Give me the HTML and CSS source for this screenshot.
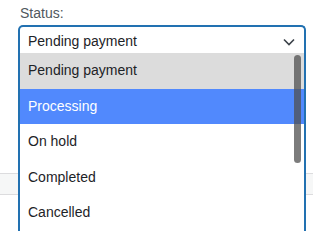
FILE: index.html
```html
<!DOCTYPE html>
<html lang="en">

<head>
    <meta charset="UTF-8">
    <meta name="viewport" content="width=device-width, initial-scale=1.0">
    <title>Order status</title>
    <link rel="stylesheet" href="styles.css">
</head>

<body>
    <div class="field">
        <label class="field-label">Status:</label>
        <div class="select">
            <span>Pending payment</span>
            <svg class="chevron" width="14" height="10" viewBox="0 0 14 10">
                <path d="M2 2.5 L7 7.5 L12 2.5" fill="none" stroke="#3c434a" stroke-width="1.6" />
            </svg>
        </div>
    </div>

    <!-- table underneath the open list -->
    <div class="table-band"></div>

    <!-- Open dropdown -->
    <ul class="dropdown">
        <li class="option hovered">Pending payment</li>
        <li class="option selected">Processing</li>
        <li class="option">On hold</li>
        <li class="option">Completed</li>
        <li class="option">Cancelled</li>
        <div class="scrollbar"></div>
    </ul>
</body>

</html>
```

FILE: styles.css
```css
body {
    margin: 0;
    font-family: "Liberation Sans", Arial, sans-serif;
    color: #1d2327;
    background: #fff;
    overflow: hidden;
}

.field {
    padding: 5px 7px 0 18px;
}

.field-label {
    display: block;
    font-size: 14px;
    line-height: 17px;
    color: #50575e;
    padding-left: 2px;
    margin-bottom: 3px;
}

.select {
    height: 24px;
    border: 2px solid #2271b1;
    border-bottom: none;
    border-radius: 5px 5px 0 0;
    display: flex;
    align-items: center;
    justify-content: space-between;
    padding: 2px 8px 0 8px;
    font-size: 14px;
}

.chevron {
    margin-top: 1px;
}

.table-band {
    margin-top: 120px;
    height: 20px;
    background: #f6f7f7;
    border-top: 1px solid #dcdcde;
    border-bottom: 1px solid #dcdcde;
}

.dropdown {
    position: absolute;
    top: 53px;
    left: 18px;
    width: 284px;
    margin: 0;
    padding: 0;
    list-style: none;
    background: #fff;
    border-left: 2px solid #2271b1;
    border-right: 2px solid #2271b1;
}

.option {
    height: 35.5px;
    line-height: 35.5px;
    padding-left: 8px;
    font-size: 14px;
}

.option.hovered {
    background: #dcdcdc;
}

.option.selected {
    background: #5189fd;
    color: #fff;
}

.scrollbar {
    position: absolute;
    top: 2px;
    right: 3px;
    width: 7px;
    height: 108px;
    border-radius: 4px;
    background: rgba(80, 80, 80, 0.75);
}
```
